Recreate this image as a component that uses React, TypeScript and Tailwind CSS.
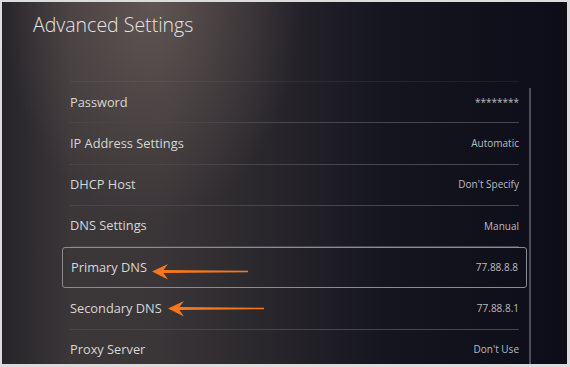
const rows = [
  { label: 'Password', value: '********' },
  { label: 'IP Address Settings', value: 'Automatic' },
  { label: 'DHCP Host', value: "Don't Specify" },
  { label: 'DNS Settings', value: 'Manual' },
  { label: 'Primary DNS', value: '77.88.8.8', focused: true },
  { label: 'Secondary DNS', value: '77.88.8.1' },
  { label: 'Proxy Server', value: "Don't Use" },
]

function Arrow({ className }: { className: string }) {
  return (
    <svg className={className} width="96" height="16" viewBox="0 0 96 16" fill="none">
      <polygon points="0,7.5 16,0 11.5,6 96,6.8 96,8.2 11.5,9 16,15.5" fill="#f5781c" />
    </svg>
  )
}

export default function App() {
  return (
    <div className="w-[570px] h-[367px] bg-[#dcdcdc] pt-[2px] pl-[2px] pr-[3px] pb-[3px] font-['Open_Sans','Noto_Sans',sans-serif]">
      <div className="relative h-full w-full overflow-hidden bg-[radial-gradient(ellipse_150px_220px_at_150px_0px,rgba(125,110,105,0.55),transparent),linear-gradient(to_right,#26242a_0%,#3b3638_12%,#3a3537_28%,#2b282d_45%,#15151f_68%,#0c0d18_100%)]">
        <h1 className="pl-[31px] pt-[9px] text-[19.5px] leading-[28px] font-light text-[#e6e4e4]">
          Advanced Settings
        </h1>

        <div className="ml-[60px] mt-[42px] flex">
          <div className="w-[465px]">
            <div className="mx-[8px] h-px bg-[linear-gradient(to_right,rgba(120,112,112,0.2),rgba(90,90,110,0.2))]" />
            {rows.map((r) => (
              <div
                key={r.label}
                className={
                  r.focused
                    ? 'flex h-[41.3px] items-center justify-between rounded-[3px] border border-[#8d8b92] px-[8px]'
                    : 'mx-[8px] flex h-[41.3px] items-center justify-between border-b border-[#48454d]'
                }
              >
                <span className="text-[12.8px] text-[#d8d6d6]">{r.label}</span>
                <span className="text-[10px] text-[#bbbbc1]">{r.value}</span>
              </div>
            ))}
          </div>
          {/* scrollbar */}
          <div className="ml-[2px] mt-[7px] w-[2px] self-stretch bg-[#4c4d58]" />
        </div>

        <Arrow className="absolute left-[150px] top-[262px]" />
        <Arrow className="absolute left-[166px] top-[299px]" />
      </div>
    </div>
  )
}
